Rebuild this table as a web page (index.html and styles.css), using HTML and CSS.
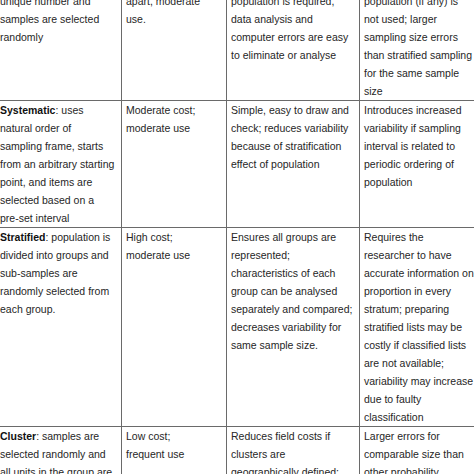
FILE: index.html
```html
<!DOCTYPE html>
<html lang="en">
<head>
<meta charset="utf-8">
<title>Sampling methods</title>
<link rel="stylesheet" href="styles.css">
</head>
<body>
<table class="grid">
  <colgroup>
    <col class="c1"><col class="c2"><col class="c3"><col class="c4">
  </colgroup>
  <tbody>
    <tr>
      <td>of the population is given a<br>unique number and<br>samples are selected<br>randomly</td>
      <td>Low cost; if far<br>apart, moderate<br>use.</td>
      <td>Only a list of the<br>population is required,<br>data analysis and<br>computer errors are easy<br>to eliminate or analyse</td>
      <td>Knowledge of the<br>population (if any) is<br>not used; larger<br>sampling size errors<br>than stratified sampling<br>for the same sample<br>size</td>
    </tr>
    <tr>
      <td><b>Systematic</b>: uses<br>natural order of<br>sampling frame, starts<br>from an arbitrary starting<br>point, and items are<br>selected based on a<br>pre-set interval</td>
      <td>Moderate cost;<br>moderate use</td>
      <td>Simple, easy to draw and<br>check; reduces variability<br>because of stratification<br>effect of population</td>
      <td>Introduces increased<br>variability if sampling<br>interval is related to<br>periodic ordering of<br>population</td>
    </tr>
    <tr>
      <td><b>Stratified</b>: population is<br>divided into groups and<br>sub-samples are<br>randomly selected from<br>each group.</td>
      <td>High cost;<br>moderate use</td>
      <td>Ensures all groups are<br>represented;<br>characteristics of each<br>group can be analysed<br>separately and compared;<br>decreases variability for<br>same sample size.</td>
      <td>Requires the<br>researcher to have<br>accurate information on<br>proportion in every<br>stratum; preparing<br>stratified lists may be<br>costly if classified lists<br>are not available;<br>variability may increase<br>due to faulty<br>classification</td>
    </tr>
    <tr>
      <td><b>Cluster</b>: samples are<br>selected randomly and<br>all units in the group are<br>studied</td>
      <td>Low cost;<br>frequent use</td>
      <td>Reduces field costs if<br>clusters are<br>geographically defined;<br>easy to do</td>
      <td>Larger errors for<br>comparable size than<br>other probability<br>samples</td>
    </tr>
  </tbody>
</table>
</body>
</html>
```

FILE: styles.css
```css
html, body {
  margin: 0;
  padding: 0;
  background: #ffffff;
  overflow: hidden;
}

.grid {
  border-collapse: collapse;
  table-layout: fixed;
  width: 494px;
  margin: -27px 0 0 -5px;
  font-family: "Liberation Sans", Arial, sans-serif;
  font-size: 10.5px;
  line-height: 18px;
  color: #262626;
}

.c1 { width: 126px; }
.c2 { width: 105px; }
.c3 { width: 133px; }
.c4 { width: 130px; }

.grid td {
  border: 1px solid #6a6a6a;
  padding: 0 4px;
  vertical-align: top;
  white-space: nowrap;
  overflow: hidden;
}

.grid b {
  font-weight: bold;
  color: #111;
}
```
